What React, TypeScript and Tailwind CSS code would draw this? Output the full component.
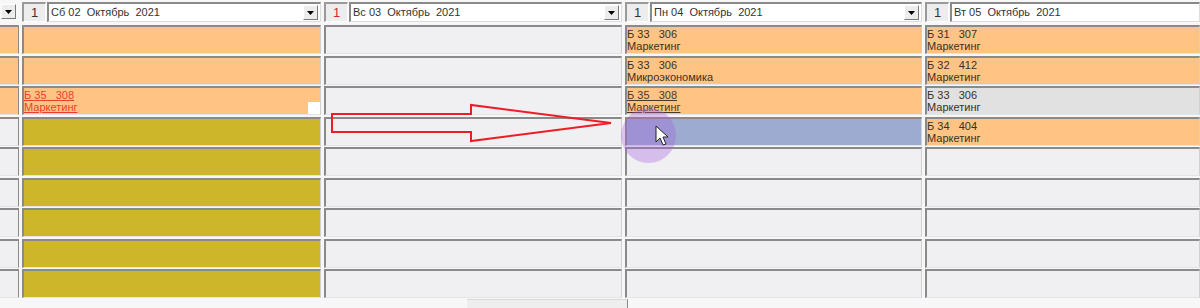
import React from "react";

type Cell = {
  bg: string;
  l1?: string;
  l2?: string;
  link?: "red" | "dark";
  mark?: boolean;
};

const O = "bg-[#ffc483]";
const G = "bg-[#f0eff1]";
const Y = "bg-[#cdb629]";
const B = "bg-[#9cabcf]";
const H = "bg-[#e1e1e1]";

const days: { num: string; red?: boolean; label: string; cells: Cell[]; w: string }[] = [
  {
    num: "1",
    label: "Сб 02  Октябрь  2021",
    w: "w-[299px]",
    cells: [
      { bg: O },
      { bg: O },
      { bg: O, l1: "Б 35   308", l2: "Маркетинг", link: "red", mark: true },
      { bg: Y },
      { bg: Y },
      { bg: Y },
      { bg: Y },
      { bg: Y },
      { bg: Y },
    ],
  },
  {
    num: "1",
    red: true,
    label: "Вс 03  Октябрь  2021",
    w: "w-[298px]",
    cells: Array.from({ length: 9 }, () => ({ bg: G })),
  },
  {
    num: "1",
    label: "Пн 04  Октябрь  2021",
    w: "w-[297px]",
    cells: [
      { bg: O, l1: "Б 33   306", l2: "Маркетинг" },
      { bg: O, l1: "Б 33   306", l2: "Микроэкономика" },
      { bg: O, l1: "Б 35   308", l2: "Маркетинг", link: "dark" },
      { bg: B },
      { bg: G },
      { bg: G },
      { bg: G },
      { bg: G },
      { bg: G },
    ],
  },
  {
    num: "1",
    label: "Вт 05  Октябрь  2021",
    w: "flex-1",
    cells: [
      { bg: O, l1: "Б 31   307", l2: "Маркетинг" },
      { bg: O, l1: "Б 32   412", l2: "Маркетинг" },
      { bg: H, l1: "Б 33   306", l2: "Маркетинг" },
      { bg: O, l1: "Б 34   404", l2: "Маркетинг" },
      { bg: G },
      { bg: G },
      { bg: G },
      { bg: G },
      { bg: G },
    ],
  },
];

function DropBtn() {
  return (
    <div className="flex h-[15px] w-[15px] items-center justify-center border border-t-white border-l-white border-b-[#7a7a7a] border-r-[#7a7a7a] bg-[#ececec]">
      <svg width="7" height="4" viewBox="0 0 7 4">
        <path d="M0 0h7L3.5 4z" fill="#000" />
      </svg>
    </div>
  );
}

function CellBox({ c }: { c: Cell }) {
  const txt =
    c.link === "red"
      ? "text-[#e8402c] underline decoration-1 underline-offset-1"
      : c.link === "dark"
      ? "text-[#4a3828] underline decoration-1 underline-offset-1"
      : "text-[#3a3024]";
  return (
    <div
      className={`relative h-[29px] border-t-2 border-l-2 border-b border-r border-t-[#8a8a8a] border-l-[#8a8a8a] border-b-[#e4e4e4] border-r-[#d0d0d0] ${c.bg}`}
    >
      {c.l1 && (
        <div className={`pt-[1px] text-[11px] leading-[12px] whitespace-pre ${txt}`}>
          <div>{c.l1}</div>
          <div>{c.l2}</div>
        </div>
      )}
      {c.mark && <div className="absolute right-0 bottom-0 h-[12px] w-[12px] bg-white" />}
    </div>
  );
}

export default function App() {
  return (
    <div
      className="relative h-[308px] w-[1200px] overflow-hidden bg-[#f7f7f7]"
      style={{ fontFamily: "'Liberation Sans', Arial, sans-serif" }}
    >
      <div className="flex gap-[3px]">
        {/* left partial column */}
        <div className="flex w-[19px] flex-col">
          <div className="flex h-[25px] items-start pt-[4px] pl-[1px]">
            <DropBtn />
          </div>
          <div className="flex flex-col gap-[1.5px]">
            {[O, O, O, G, G, G, G, G, G].map((bg, i) => (
              <div
                key={i}
                className={`h-[29px] border-t-2 border-r border-b border-t-[#8a8a8a] border-r-[#8a8a8a] border-b-[#e4e4e4] ${bg}`}
              />
            ))}
          </div>
        </div>
        {days.map((d, i) => (
          <div key={i} className={`flex flex-col ${d.w}`}>
            <div className="flex h-[25px] items-start gap-[1px] pt-[2px]">
              <div
                className={`flex h-[20px] w-[24px] items-center justify-center border-t-2 border-l-2 border-b border-r border-t-[#9a9a9a] border-l-[#9a9a9a] border-b-white border-r-white bg-[#ededed] text-[13px] ${
                  d.red ? "text-[#d4282a]" : "text-[#333]"
                }`}
              >
                {d.num}
              </div>
              <div className="flex h-[20px] flex-1 items-center justify-between border-t-2 border-l-2 border-b border-r border-t-[#8a8a8a] border-l-[#8a8a8a] border-b-[#dcdcdc] border-r-[#dcdcdc] bg-white pl-[2px] pr-[2px]">
                <span className="whitespace-pre text-[11px] text-[#333]">{d.label}</span>
                {i < 3 && <DropBtn />}
              </div>
            </div>
            <div className="flex flex-col gap-[1.5px]">
              {d.cells.map((c, j) => (
                <CellBox key={j} c={c} />
              ))}
            </div>
          </div>
        ))}
      </div>

      {/* bottom scroll thumb */}
      <div className="absolute bottom-0 left-[467px] h-[9px] w-[161px] border-t border-r border-t-[#d8d8d8] border-r-[#8a8a8a] bg-[#eeeeee]" />

      {/* red annotation arrow */}
      <svg className="absolute left-0 top-0" width="1200" height="308">
        <polygon
          points="332,114 471,114 471,105 611,123 471,141 471,132 332,132"
          fill="none"
          stroke="#ee1c24"
          strokeWidth="2"
        />
      </svg>

      {/* click highlight and cursor */}
      <div className="absolute left-[621px] top-[108px] h-[55px] w-[55px] rounded-full bg-[#a463e0]/35" />
      <svg className="absolute left-[655px] top-[125px]" width="16" height="24" viewBox="0 0 16 24">
        <path
          d="M1 1 L1 17 L5 13 L8 20 L11 19 L8 12 L13 12 Z"
          fill="#fff"
          stroke="#222"
          strokeWidth="1"
        />
      </svg>
    </div>
  );
}
